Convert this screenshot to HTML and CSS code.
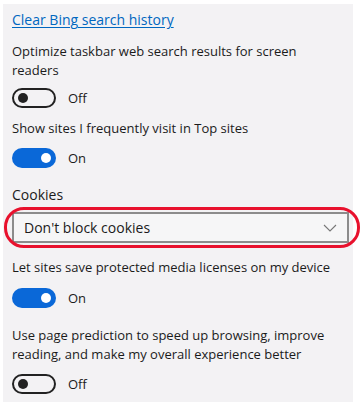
FILE: index.html
```html
<!DOCTYPE html>
<html>
<head>
<meta charset="utf-8">
<link rel="stylesheet" href="styles.css">
</head>
<body>
<div class="panel">
  <a class="link" href="#">Clear Bing search history</a>

  <div class="setting s1">
    <p class="label">Optimize taskbar web search results for screen readers</p>
    <div class="toggle-row">
      <span class="toggle off"><span class="knob"></span></span>
      <span class="state">Off</span>
    </div>
  </div>

  <div class="setting s2">
    <p class="label">Show sites I frequently visit in Top sites</p>
    <div class="toggle-row">
      <span class="toggle on"><span class="knob"></span></span>
      <span class="state">On</span>
    </div>
  </div>

  <div class="setting s3">
    <p class="label">Cookies</p>
    <div class="select-wrap">
      <div class="select">
        <span>Don't block cookies</span>
        <svg class="chev" width="14" height="8" viewBox="0 0 14 8"><path d="M1 1 L7 7 L13 1" fill="none" stroke="#777" stroke-width="1.1"/></svg>
      </div>
      <div class="ring"></div>
    </div>
  </div>

  <div class="setting s4">
    <p class="label">Let sites save protected media licenses on my device</p>
    <div class="toggle-row">
      <span class="toggle on"><span class="knob"></span></span>
      <span class="state">On</span>
    </div>
  </div>

  <div class="setting s5">
    <p class="label">Use page prediction to speed up browsing, improve reading, and make my overall experience better</p>
    <div class="toggle-row">
      <span class="toggle off"><span class="knob"></span></span>
      <span class="state">Off</span>
    </div>
  </div>
</div>
</body>
</html>
```

FILE: styles.css
```css
html, body {
  margin: 0;
  padding: 0;
  background: #ffffff;
}
body {
  font-family: "Open Sans", "Noto Sans", "Liberation Sans", sans-serif;
  font-size: 13px;
  color: #1b1b1b;
}
.panel {
  margin: 4px 0 0 3px;
  width: 341px;
  height: 392px;
  padding: 6px 0 0 9px;
  background: #f3f2f4;
  display: flex;
  flex-direction: column;
  align-items: flex-start;
}
.link {
  font-size: 14px;
  line-height: 19px;
  color: #0067c0;
  text-decoration: underline;
  text-underline-offset: 2px;
}
.setting {
  display: flex;
  flex-direction: column;
  align-items: flex-start;
  width: 100%;
}
.label {
  margin: 0;
  line-height: 19px;
  width: 330px;
}
.s1 { margin-top: 13px; }
.s2 { margin-top: 11px; }
.s3 { margin-top: 17px; }
.s4 { margin-top: 15px; }
.s5 { margin-top: 18px; }
.s1 .toggle-row { margin-top: 8px; }
.s2 .toggle-row { margin-top: 10px; }
.s4 .toggle-row { margin-top: 11px; }
.s5 .toggle-row { margin-top: 10px; }
.s3 .label { font-size: 14px; }

.toggle-row {
  display: flex;
  align-items: center;
  gap: 12px;
  height: 20px;
}
.toggle {
  box-sizing: border-box;
  width: 44px;
  height: 20px;
  border-radius: 10px;
  display: flex;
  align-items: center;
  padding: 0 4px;
}
.toggle.off {
  border: 2px solid #222;
  background: transparent;
  justify-content: flex-start;
}
.toggle.on {
  background: #0a68d8;
  justify-content: flex-end;
  padding: 0 5px;
}
.knob {
  width: 10px;
  height: 10px;
  border-radius: 50%;
}
.toggle.off .knob { background: #222; }
.toggle.on .knob { background: #ffffff; }
.state {
  font-size: 13px;
  line-height: 19px;
}

.select-wrap {
  position: relative;
  margin-top: 8px;
  width: 337px;
}
.select {
  box-sizing: border-box;
  height: 31px;
  border: 2px solid #8c8c8c;
  background: #f6f6f7;
  display: flex;
  align-items: center;
  justify-content: space-between;
  padding: 0 10px 0 10px;
  font-size: 14px;
}
.chev { display: block; }
.ring {
  position: absolute;
  left: -8px;
  right: -11px;
  top: -5px;
  bottom: -5px;
  border: 3px solid #e8112d;
  border-radius: 20px;
}
```
